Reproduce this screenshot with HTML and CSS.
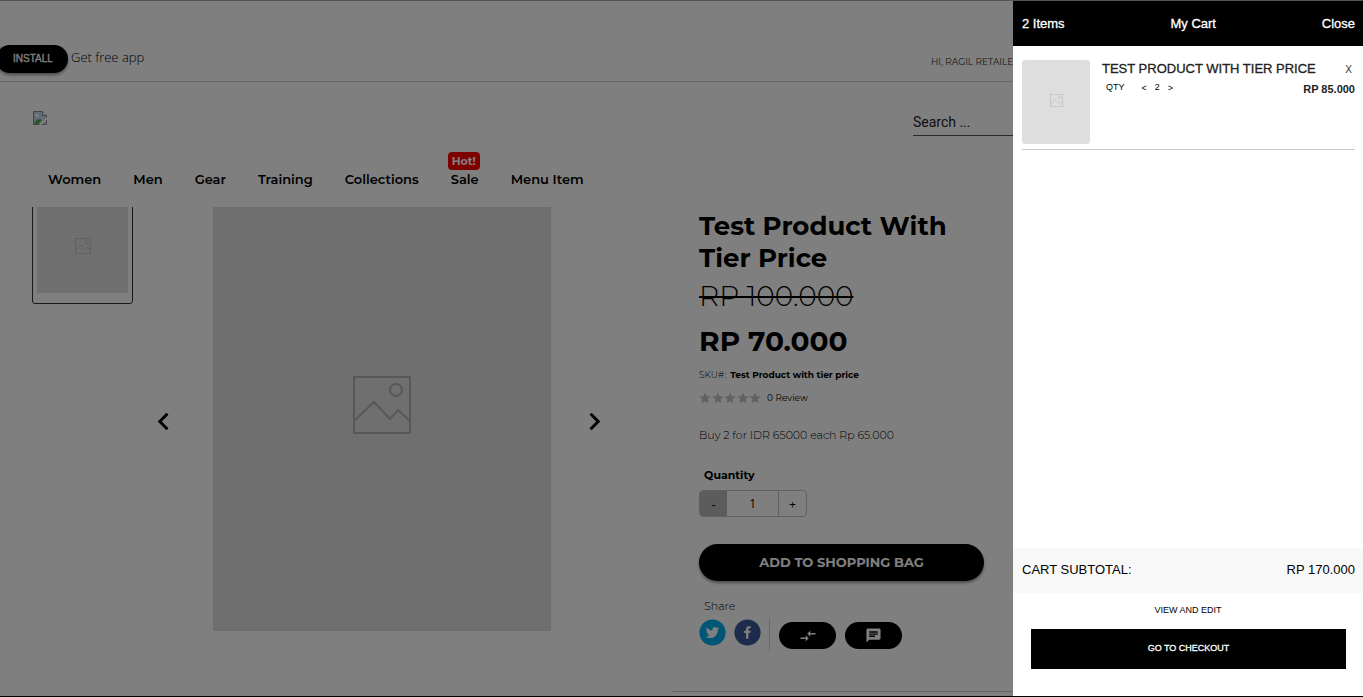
FILE: index.html
```
<!DOCTYPE html>
<html lang="en">
  <head>
    <meta charset="UTF-8" />
    <meta name="viewport" content="width=device-width, initial-scale=1.0" />
    <title>Test Product With Tier Price</title>
    <link rel="stylesheet" href="styles.css">
  </head>
  <body>
    <!-- shared placeholder picture -->
    <svg class="sprite" width="0" height="0">
      <symbol id="placeholder" viewBox="0 0 58 58">
        <g fill="none" stroke="currentColor" stroke-width="2">
          <rect x="1" y="1" width="56" height="56" />
          <circle cx="43" cy="14" r="6" />
          <path d="M1 45 21 26 37 43 45 34 57 45" />
        </g>
      </symbol>
    </svg>

    <header>
      <div class="top-bar">
        <button class="install">INSTALL</button>
        <span class="free-app">Get free app</span>
        <a class="account" href="#">HI, RAGIL RETAILER</a>
      </div>
      <div class="brand-bar">
        <a href="#" class="logo" aria-label="Home">
          <svg width="16" height="16" viewBox="0 0 16 16">
            <path d="M1.500 1.500h9l4 4v9h-13z" fill="#c6d5f2" stroke="#8a8a8a" />
            <path d="M10.500 1.500v4h4" fill="#fff" stroke="#8a8a8a" />
            <path d="M2 14c1-4 5-6 8-4l-4 4z" fill="#4caf3c" />
            <circle cx="5" cy="5.500" r="1.500" fill="#fff" />
            <path d="M8 15 15 8" stroke="#fff" stroke-width="2" />
          </svg>
        </a>
        <input class="search" type="text" placeholder="Search ..." aria-label="Search" />
      </div>
      <nav>
        <a href="#">Women</a>
        <a href="#">Men</a>
        <a href="#">Gear</a>
        <a href="#">Training</a>
        <a href="#">Collections</a>
        <a href="#" class="sale">Sale<span class="hot">Hot!</span></a>
        <a href="#">Menu Item</a>
      </nav>
    </header>

    <main>
      <div class="thumb">
        <div class="thumb-image"><svg width="16" height="16"><use href="#placeholder" /></svg></div>
      </div>
      <div class="gallery">
        <button class="arrow" aria-label="Previous">
          <svg width="35" height="35" viewBox="0 0 24 24"><path d="M15.410 7.410 14 6l-6 6 6 6 1.410-1.410L10.830 12z" /></svg>
        </button>
        <div class="gallery-image"><svg width="58" height="58"><use href="#placeholder" /></svg></div>
        <button class="arrow" aria-label="Next">
          <svg width="35" height="35" viewBox="0 0 24 24"><path d="M10 6 8.590 7.410 13.170 12l-4.580 4.590L10 18l6-6z" /></svg>
        </button>
      </div>
      <div class="info">
        <h1>Test Product With Tier Price</h1>
        <del class="old-price">RP 100.000</del>
        <strong class="price">RP 70.000</strong>
        <p class="sku">SKU#: <b>Test Product with tier price</b></p>
        <div class="review">
          <svg width="62" height="12" viewBox="0 0 62 12">
            <path id="star" d="M6 .5 7.600 4.300l4 .3-3 2.700.9 4L6 9.200l-3.500 2.100.9-4-3-2.700 4-.3z" />
            <use href="#star" x="13" />
            <use href="#star" x="25" />
            <use href="#star" x="38" />
            <use href="#star" x="50" />
          </svg>
          <span>0 Review</span>
        </div>
        <p class="tier">Buy 2 for IDR 65000 each Rp 65.000</p>
        <label class="qty-label" for="qty">Quantity</label>
        <div class="qty">
          <button class="minus">-</button>
          <input id="qty" type="text" value="1" />
          <button>+</button>
        </div>
        <button class="add">ADD TO SHOPPING BAG</button>
        <p class="share-label">Share</p>
        <div class="share">
          <a href="#" class="social" aria-label="Twitter">
            <svg width="27" height="27" viewBox="0 0 64 64">
              <circle cx="32" cy="32" r="31" fill="#00aced" />
              <path d="M48 22.100c-1.200.5-2.400.9-3.800 1 1.400-.8 2.400-2.100 2.900-3.600-1.300.8-2.700 1.300-4.200 1.600-1.200-1.300-2.900-2.100-4.800-2.100-3.600 0-6.600 2.900-6.600 6.600 0 .5.100 1 .2 1.500-5.500-.3-10.300-2.900-13.500-6.900-.6 1-.9 2.100-.9 3.300 0 2.300 1.200 4.300 2.900 5.500-1.100 0-2.100-.3-3-.8v.1c0 3.200 2.300 5.800 5.300 6.400-.6.100-1.100.2-1.700.2-.4 0-.8 0-1.200-.1.800 2.600 3.300 4.500 6.100 4.600-2.200 1.800-5.100 2.800-8.200 2.800-.5 0-1.100 0-1.600-.1 2.900 1.900 6.400 3 10.100 3 12.100 0 18.700-10 18.700-18.700v-.8c1.300-1 2.400-2.200 3.300-3.500z" fill="#fff" />
            </svg>
          </a>
          <a href="#" class="social" aria-label="Facebook">
            <svg width="27" height="27" viewBox="0 0 64 64">
              <circle cx="32" cy="32" r="31" fill="#3b5998" />
              <path d="M34.100 47V33.300h4.600l.7-5.300h-5.300v-3.400c0-1.500.4-2.600 2.600-2.600h2.800v-4.800c-.5-.1-2.200-.2-4.100-.2-4.100 0-6.900 2.500-6.900 7V28H24v5.300h4.500V47h5.600z" fill="#fff" />
            </svg>
          </a>
          <div class="actions">
            <button aria-label="Compare">
              <svg width="18" height="18" viewBox="0 0 24 24"><path d="M9.010 14H2v2h7.010v3L13 15l-3.990-4v3zm5.980-1v-3H22V8h-7.010V5L11 9l3.990 4z" /></svg>
            </button>
            <button aria-label="Chat">
              <svg width="17" height="17" viewBox="0 0 24 24"><path d="M20 2H4c-1.100 0-1.990.9-1.990 2L2 22l4-4h14c1.100 0 2-.9 2-2V4c0-1.100-.9-2-2-2zM6 9h12v2H6V9zm8 5H6v-2h8v2zm4-6H6V6h12v2z" /></svg>
            </button>
          </div>
        </div>
        <hr />
      </div>
    </main>

    <div class="backdrop"></div>

    <aside class="cart">
      <div class="cart-header">
        <span>2 Items</span>
        <span>My Cart</span>
        <button>Close</button>
      </div>
      <div class="cart-items">
        <div class="cart-item">
          <div class="cart-image"><svg width="13" height="13"><use href="#placeholder" /></svg></div>
          <div class="cart-detail">
            <div class="cart-row">
              <a href="#" class="cart-name">TEST PRODUCT WITH TIER PRICE</a>
              <button class="remove">X</button>
            </div>
            <div class="cart-row">
              <div class="cart-qty">
                <span>QTY</span>
                <button>&lt;</button>
                <span class="count">2</span>
                <button>&gt;</button>
              </div>
              <b class="cart-price">RP 85.000</b>
            </div>
          </div>
        </div>
      </div>
      <div class="subtotal">
        <span>CART SUBTOTAL:</span>
        <span>RP 170.000</span>
      </div>
      <a href="#" class="view-edit">VIEW AND EDIT</a>
      <button class="checkout">GO TO CHECKOUT</button>
    </aside>
  </body>
</html>
```
FILE: styles.css
```
* {
  box-sizing: border-box;
}
body {
  font-family: Montserrat, Inter, sans-serif;
  font-size: 11px;
  margin: 0;
  height: 100vh;
  overflow: hidden;
  color: #000;
  background: #fff;
}
button {
  font-family: inherit;
  padding: 0;
  border: none;
  background: none;
  cursor: pointer;
}
a {
  color: inherit;
  text-decoration: none;
}
svg {
  display: block;
}
p,
h1 {
  margin: 0;
}
.sprite {
  position: absolute;
}

/* Header */
header {
  position: relative;
  z-index: 1;
  height: 207px;
  background: #fff;
}
.top-bar {
  display: flex;
  align-items: center;
  height: 82px;
  padding-top: 36px;
  border-bottom: 1px solid #d0d0d0;
}
.install {
  width: 72px;
  height: 28px;
  margin-left: -4px;
  padding-left: 2px;
  border-radius: 14px;
  background: #000;
  color: #fff;
  font: 500 10px "Liberation Sans", sans-serif;
  -webkit-text-stroke: 0.3px;
  box-shadow: 0 2px 3px rgba(0, 0, 0, 0.4);
}
.free-app {
  margin-left: 3px;
  padding-bottom: 4px;
  font: 300 13px "Open Sans", sans-serif;
}
.account {
  width: 432px;
  margin-left: auto;
  padding-top: 5px;
  font-size: 9px;
  font-weight: 400;
  color: #333;
}
.brand-bar {
  display: flex;
  justify-content: space-between;
  padding: 28px 16% 0 32px;
}
.search {
  width: 232px;
  height: 26px;
  padding: 0 0 2px;
  border: none;
  border-bottom: 1px solid #555;
  background: none;
  font: 14px Roboto, sans-serif;
}
.search::placeholder {
  color: #222;
}
nav {
  display: flex;
  gap: 32px;
  padding: 33px 48px 0;
  font-size: 13px;
  font-weight: 600;
  line-height: 20px;
}
.sale {
  position: relative;
}
.hot {
  position: absolute;
  left: -3px;
  top: -17px;
  padding: 0 4px;
  border-radius: 4px;
  background: #f00;
  color: #fff;
  font-size: 11px;
  font-weight: bold;
  line-height: 18px;
}

/* Product */
main {
  display: grid;
  grid-template-columns: 101px 9fr 11fr;
  align-items: start;
  margin-top: -27px;
  padding: 0 32px;
}
.thumb {
  margin-top: 14px;
  padding: 4px 4px 10px;
  border: 1px solid #333;
  border-radius: 3px;
}
.thumb-image,
.gallery-image,
.cart-image {
  display: flex;
  align-items: center;
  justify-content: center;
  background: #dedede;
  color: #b0b0b0;
}
.thumb-image {
  height: 94px;
}
.gallery {
  display: flex;
  align-items: center;
  padding: 0 60px 0 13px;
}
.arrow {
  margin-top: 32px;
}
.gallery-image {
  flex: 1;
  aspect-ratio: 3 / 4;
  margin: 0 26px 0 32px;
}
.info {
  padding: 30px 0 0 27px;
}
h1 {
  max-width: 285px;
  font-size: 26px;
  font-weight: 700;
  line-height: 32px;
}
.old-price,
.price {
  display: block;
  font-size: 28px;
  line-height: 45px;
}
.old-price {
  font-weight: 300;
}
.price {
  font-weight: 700;
}
.sku {
  margin-top: 1px;
  font-size: 9px;
  font-weight: 300;
  line-height: 20px;
}
.sku b {
  margin-left: 2px;
  font-weight: 700;
}
.review {
  display: flex;
  align-items: center;
  gap: 6px;
  margin-top: 3px;
  font-size: 9px;
  font-weight: 400;
  line-height: 20px;
}
.review svg {
  fill: #c4c4c4;
}
.tier {
  margin-top: 17px;
  font-weight: 300;
  line-height: 20px;
}
.qty-label {
  display: block;
  margin: 20px 5px 5px;
  font-weight: 700;
  line-height: 20px;
}
.qty {
  display: flex;
  width: 108px;
  height: 27px;
  border: 1px solid #c0c0c0;
  border-radius: 4px;
  overflow: hidden;
}
.qty button {
  width: 27px;
  font-size: 13px;
}
.qty .minus {
  background: #b8b8b8;
}
.qty input {
  flex: 1;
  min-width: 0;
  padding: 0;
  border: none;
  border-right: 1px solid #c0c0c0;
  background: none;
  font: 12px "Open Sans", sans-serif;
  text-align: center;
}
.add {
  display: block;
  width: 285px;
  height: 37px;
  margin-top: 27px;
  padding-bottom: 2px;
  border-radius: 19px;
  background: #000;
  color: #fff;
  font-size: 13px;
  font-weight: 700;
  box-shadow: 0 2px 3px rgba(0, 0, 0, 0.4);
}
.share-label {
  margin: 15px 5px 3px;
  font-weight: 300;
  line-height: 20px;
}
.share {
  display: flex;
}
.social {
  margin-right: 8px;
}
.actions {
  display: flex;
  gap: 9px;
  height: 32px;
  padding: 3px 0 0 9px;
  border-left: 1px solid #d0d0d0;
}
.actions button {
  display: flex;
  align-items: center;
  justify-content: center;
  width: 57px;
  height: 27px;
  border-radius: 14px;
  background: #000;
}
.actions svg {
  fill: #fff;
}
hr {
  margin: 40px 0 0 -27px;
  border: none;
  border-top: 1px solid #d0d0d0;
}

/* Cart drawer */
.backdrop {
  position: fixed;
  inset: 0;
  z-index: 2;
  border-top: 1px solid #555;
  border-bottom: 1px solid #000;
  background: rgba(0, 0, 0, 0.5);
}
.cart {
  position: fixed;
  top: 0;
  right: 0;
  bottom: 0;
  z-index: 3;
  display: flex;
  flex-direction: column;
  width: 350px;
  padding-bottom: 27px;
  border-top: 1px solid #555;
  border-bottom: 1px solid #000;
  background: #fff;
  font-family: "Liberation Sans", sans-serif;
}
.cart-header {
  display: flex;
  align-items: center;
  justify-content: space-between;
  height: 45px;
  padding: 0 8px 0 9px;
  background: #000;
  color: #fff;
  font-size: 13px;
  -webkit-text-stroke: 0.3px;
}
.cart-header button {
  color: inherit;
  font: inherit;
}
.cart-items {
  flex: 1;
  padding: 14px 8px 0 9px;
}
.cart-item {
  display: flex;
  gap: 12px;
  padding-bottom: 5px;
  border-bottom: 1px solid #c8c8c8;
}
.cart-image {
  width: 68px;
  height: 84px;
  padding-bottom: 4px;
  border-radius: 3px;
}
.cart-detail {
  flex: 1;
}
.cart-row {
  display: flex;
  justify-content: space-between;
  line-height: 18px;
}
.cart-name {
  font-size: 13px;
  -webkit-text-stroke: 0.3px;
  color: #222;
}
.remove {
  margin-right: 3px;
  font-size: 10px;
  color: #333;
}
.cart-qty {
  display: flex;
  gap: 8px;
  padding-left: 4px;
  font-size: 9px;
}
.cart-qty button {
  font-size: 9px;
}
.cart-qty span:first-child {
  margin-right: 9px;
}
.cart-price {
  padding-top: 2px;
  font-size: 11px;
  color: #222;
}
.subtotal {
  display: flex;
  align-items: center;
  justify-content: space-between;
  height: 45px;
  padding: 0 8px 2px 9px;
  background: #f8f8f8;
  font-size: 13px;
}
.view-edit {
  padding: 8px 0 10px;
  font-size: 9px;
  line-height: 18px;
  text-align: center;
}
.checkout {
  height: 40px;
  margin: 0 17px 0 18px;
  padding-bottom: 3px;
  background: #000;
  color: #fff;
  font-size: 9px;
  -webkit-text-stroke: 0.3px;
}
```
